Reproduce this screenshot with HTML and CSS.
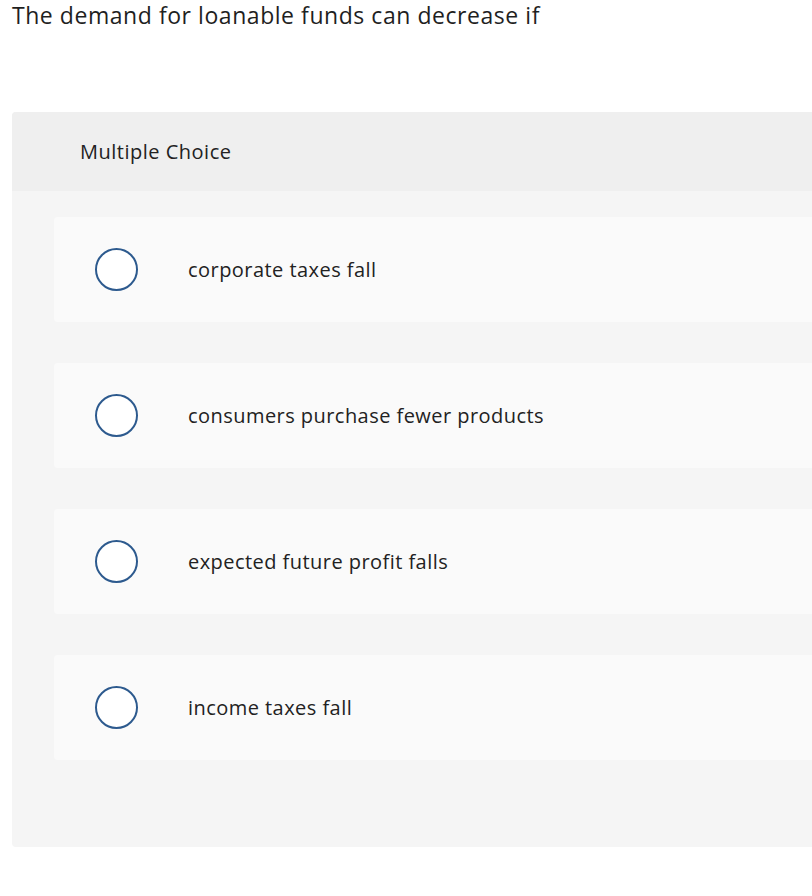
FILE: index.html
```html
<!DOCTYPE html>
<html>
<head>
<meta charset="utf-8">
<link rel="stylesheet" href="styles.css">
</head>
<body>
<div class="page">
  <h1 class="question">The demand for loanable funds can decrease if</h1>
  <div class="panel">
    <div class="panel-head">Multiple Choice</div>
    <div class="panel-body">
      <div class="option"><span class="radio"></span><span class="label">corporate taxes fall</span></div>
      <div class="option"><span class="radio"></span><span class="label">consumers purchase fewer products</span></div>
      <div class="option"><span class="radio"></span><span class="label">expected future profit falls</span></div>
      <div class="option"><span class="radio"></span><span class="label">income taxes fall</span></div>
    </div>
  </div>
</div>
</body>
</html>
```
FILE: styles.css
```css
html, body {
  margin: 0;
  padding: 0;
  background: #ffffff;
  overflow: hidden;
}
.page {
  width: 812px;
  overflow: hidden;
  font-family: "Open Sans", "Liberation Sans", sans-serif;
  color: #222222;
}
.question {
  margin: 0;
  padding: 0 0 0 12px;
  font-size: 23px;
  font-weight: 400;
  letter-spacing: 0.55px;
  line-height: 30px;
  color: #1f1f1f;
  height: 112px;
}
.panel {
  margin-left: 12px;
  width: 820px;
  background: #f5f5f5;
  border-radius: 4px 0 0 4px;
  overflow: hidden;
}
.panel-head {
  height: 79px;
  background: #efefef;
  padding-left: 68px;
  display: flex;
  align-items: center;
  font-size: 20px;
  letter-spacing: 0.5px;
  color: #222;
}
.panel-body {
  padding: 26px 0 87px 42px;
  display: flex;
  flex-direction: column;
  gap: 41px;
}
.option {
  height: 105px;
  background: #fafafa;
  border-radius: 4px 0 0 4px;
  display: flex;
  align-items: center;
}
.radio {
  width: 39px;
  height: 39px;
  border: 2px solid #2d5a8e;
  border-radius: 50%;
  background: #fff;
  margin-left: 41px;
  flex: none;
}
.label {
  margin-left: 50px;
  font-size: 20px;
  letter-spacing: 0.45px;
  color: #222;
}
```
